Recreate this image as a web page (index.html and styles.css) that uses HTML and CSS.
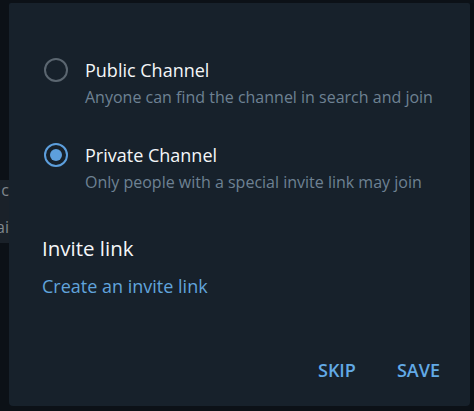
FILE: index.html
```html
<!DOCTYPE html>
<html lang="en">
<head>
<meta charset="utf-8">
<title>New Channel</title>
<link rel="stylesheet" href="styles.css">
</head>
<body>
<div class="page">
  <div class="behind-left">
    <div class="behind-panel">
      <div class="frag frag-1"><span>c</span></div>
      <div class="frag frag-2"><span>ai</span></div>
    </div>
  </div>
  <div class="dialog">
    <div class="options">
      <div class="option">
        <span class="radio"></span>
        <div class="option-text">
          <div class="option-title">Public Channel</div>
          <div class="option-desc">Anyone can find the channel in search and join</div>
        </div>
      </div>
      <div class="option option-second">
        <span class="radio radio-checked"><span class="radio-dot"></span></span>
        <div class="option-text">
          <div class="option-title">Private Channel</div>
          <div class="option-desc">Only people with a special invite link may join</div>
        </div>
      </div>
    </div>
    <div class="invite">
      <div class="invite-title">Invite link</div>
      <div class="invite-link">Create an invite link</div>
    </div>
    <div class="buttons">
      <span class="btn">SKIP</span>
      <span class="btn">SAVE</span>
    </div>
  </div>
  <div class="behind-right"></div>
</div>
</body>
</html>
```

FILE: styles.css
```css
html, body {
  margin: 0;
  padding: 0;
  background: #0c1117;
}
.page {
  width: 474px;
  height: 411px;
  display: flex;
  padding-top: 3px;
  box-sizing: border-box;
  font-family: "Open Sans", "Noto Sans", sans-serif;
  overflow: hidden;
}
.behind-left {
  width: 9px;
  flex: none;
  overflow: hidden;
}
.behind-panel {
  margin-top: 177px;
  height: 63px;
  background: #1a2129;
  color: #80878e;
  font-size: 16px;
}
.frag {
  display: flex;
  justify-content: flex-end;
  white-space: nowrap;
  overflow: hidden;
  height: 20px;
  line-height: 20px;
}
.frag-1 { margin-top: 1px; }
.frag-2 { margin-top: 17px; }
.dialog {
  width: 461px;
  height: 403px;
  flex: none;
  background: #17212b;
  border-radius: 2px 2px 4px 4px;
  box-sizing: border-box;
  display: flex;
  flex-direction: column;
}
.behind-right {
  flex: 1;
  background: #0b0f14;
}
.options {
  padding-left: 35px;
  padding-top: 55px;
}
.option {
  display: flex;
  align-items: flex-start;
  gap: 17px;
}
.option-second {
  margin-top: 35px;
}
.radio {
  width: 24px;
  height: 24px;
  box-sizing: border-box;
  border: 2px solid #5b6670;
  border-radius: 50%;
  flex: none;
  display: flex;
  align-items: center;
  justify-content: center;
}
.radio-checked {
  border-color: #5d9fdd;
}
.radio-dot {
  width: 12px;
  height: 12px;
  border-radius: 50%;
  background: #5d9fdd;
}
.option-title {
  color: #f4f6f8;
  font-size: 18px;
  line-height: 24px;
}
.option-desc {
  color: #6e8193;
  font-size: 16px;
  line-height: 22px;
  margin-top: 4px;
}
.invite {
  padding-left: 33px;
  margin-top: 42px;
}
.invite-title {
  color: #f4f6f8;
  font-size: 20.5px;
  line-height: 26px;
}
.invite-link {
  color: #61a4dc;
  font-size: 18px;
  line-height: 24px;
  margin-top: 13px;
}
.buttons {
  margin-top: 60px;
  display: flex;
  justify-content: flex-end;
  gap: 41px;
  padding-right: 30px;
}
.btn {
  color: #62aae6;
  font-size: 18px;
  font-weight: 600;
  line-height: 24px;
}
```
